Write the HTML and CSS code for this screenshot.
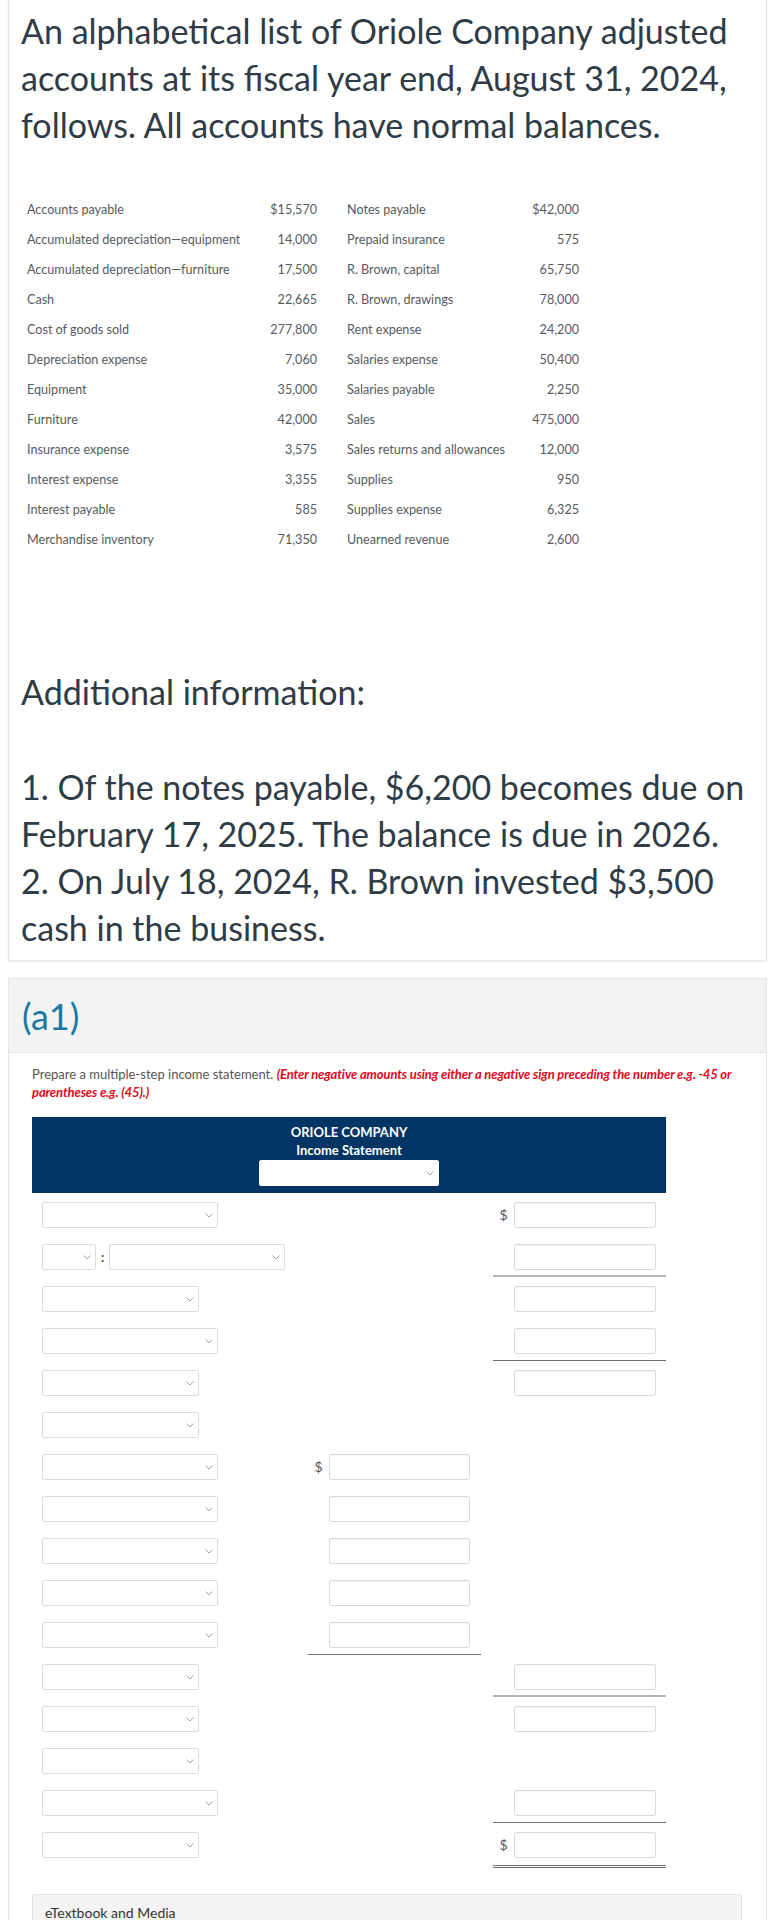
FILE: index.html
```html
<!DOCTYPE html>
<html lang="en">
<head>
<meta charset="utf-8">
<title>Oriole Company – Income Statement</title>
<link rel="stylesheet" href="styles.css">
</head>
<body>
<div class="page">
  <section class="card question">
    <p class="lead">An alphabetical list of Oriole Company adjusted accounts at its fiscal year end, August 31, 2024, follows. All accounts have normal balances.</p>
    <div class="accts">
      <span>Accounts payable</span><span class="amt">$15,570</span><span class="l2">Notes payable</span><span class="amt">$42,000</span>
      <span>Accumulated depreciation—equipment</span><span class="amt">14,000</span><span class="l2">Prepaid insurance</span><span class="amt">575</span>
      <span>Accumulated depreciation—furniture</span><span class="amt">17,500</span><span class="l2">R. Brown, capital</span><span class="amt">65,750</span>
      <span>Cash</span><span class="amt">22,665</span><span class="l2">R. Brown, drawings</span><span class="amt">78,000</span>
      <span>Cost of goods sold</span><span class="amt">277,800</span><span class="l2">Rent expense</span><span class="amt">24,200</span>
      <span>Depreciation expense</span><span class="amt">7,060</span><span class="l2">Salaries expense</span><span class="amt">50,400</span>
      <span>Equipment</span><span class="amt">35,000</span><span class="l2">Salaries payable</span><span class="amt">2,250</span>
      <span>Furniture</span><span class="amt">42,000</span><span class="l2">Sales</span><span class="amt">475,000</span>
      <span>Insurance expense</span><span class="amt">3,575</span><span class="l2">Sales returns and allowances</span><span class="amt">12,000</span>
      <span>Interest expense</span><span class="amt">3,355</span><span class="l2">Supplies</span><span class="amt">950</span>
      <span>Interest payable</span><span class="amt">585</span><span class="l2">Supplies expense</span><span class="amt">6,325</span>
      <span>Merchandise inventory</span><span class="amt">71,350</span><span class="l2">Unearned revenue</span><span class="amt">2,600</span>
    </div>
    <p class="lead addl">Additional information:</p>
    <p class="lead items">1. Of the notes payable, $6,200 becomes due on February 17, 2025. The balance is due in 2026.<br>2. On July 18, 2024, R. Brown invested $3,500 cash in the business.</p>
  </section>

  <section class="card part">
    <header class="part-head"><h2>(a1)</h2></header>
    <div class="part-body">
      <p class="instr">Prepare a multiple-step income statement. <em>(Enter negative amounts using either a negative sign preceding the number e.g. -45 or parentheses e.g. (45).)</em></p>

      <div class="stmt">
        <div class="stmt-head">
          <div>ORIOLE COMPANY</div>
          <div>Income Statement</div>
          <div class="sel hsel"><svg class="chev" width="8" height="5" viewBox="0 0 8 5"><polyline points="0.5,0.5 4,4 7.5,0.5"/></svg></div>
        </div>

        <div class="srow">
          <div class="c left"><div class="sel w-l"><svg class="chev" width="8" height="5" viewBox="0 0 8 5"><polyline points="0.5,0.5 4,4 7.5,0.5"/></svg></div></div>
          <div class="c mid"></div>
          <div class="c right"><span class="cur">$</span><div class="inp"></div></div>
        </div>
        <div class="srow">
          <div class="c left"><div class="sel w-xs"><svg class="chev" width="8" height="5" viewBox="0 0 8 5"><polyline points="0.5,0.5 4,4 7.5,0.5"/></svg></div><span class="colon">:</span><div class="sel w-l"><svg class="chev" width="8" height="5" viewBox="0 0 8 5"><polyline points="0.5,0.5 4,4 7.5,0.5"/></svg></div></div>
          <div class="c mid"></div>
          <div class="c right ul-light"><span class="cur"></span><div class="inp"></div></div>
        </div>
        <div class="srow">
          <div class="c left"><div class="sel w-s"><svg class="chev" width="8" height="5" viewBox="0 0 8 5"><polyline points="0.5,0.5 4,4 7.5,0.5"/></svg></div></div>
          <div class="c mid"></div>
          <div class="c right"><span class="cur"></span><div class="inp"></div></div>
        </div>
        <div class="srow">
          <div class="c left"><div class="sel w-l"><svg class="chev" width="8" height="5" viewBox="0 0 8 5"><polyline points="0.5,0.5 4,4 7.5,0.5"/></svg></div></div>
          <div class="c mid"></div>
          <div class="c right ul-dark"><span class="cur"></span><div class="inp"></div></div>
        </div>
        <div class="srow">
          <div class="c left"><div class="sel w-s"><svg class="chev" width="8" height="5" viewBox="0 0 8 5"><polyline points="0.5,0.5 4,4 7.5,0.5"/></svg></div></div>
          <div class="c mid"></div>
          <div class="c right"><span class="cur"></span><div class="inp"></div></div>
        </div>
        <div class="srow">
          <div class="c left"><div class="sel w-s"><svg class="chev" width="8" height="5" viewBox="0 0 8 5"><polyline points="0.5,0.5 4,4 7.5,0.5"/></svg></div></div>
          <div class="c mid"></div>
          <div class="c right"></div>
        </div>
        <div class="srow">
          <div class="c left"><div class="sel w-l"><svg class="chev" width="8" height="5" viewBox="0 0 8 5"><polyline points="0.5,0.5 4,4 7.5,0.5"/></svg></div></div>
          <div class="c mid"><span class="cur">$</span><div class="inp"></div></div>
          <div class="c right"></div>
        </div>
        <div class="srow">
          <div class="c left"><div class="sel w-l"><svg class="chev" width="8" height="5" viewBox="0 0 8 5"><polyline points="0.5,0.5 4,4 7.5,0.5"/></svg></div></div>
          <div class="c mid"><span class="cur"></span><div class="inp"></div></div>
          <div class="c right"></div>
        </div>
        <div class="srow">
          <div class="c left"><div class="sel w-l"><svg class="chev" width="8" height="5" viewBox="0 0 8 5"><polyline points="0.5,0.5 4,4 7.5,0.5"/></svg></div></div>
          <div class="c mid"><span class="cur"></span><div class="inp"></div></div>
          <div class="c right"></div>
        </div>
        <div class="srow">
          <div class="c left"><div class="sel w-l"><svg class="chev" width="8" height="5" viewBox="0 0 8 5"><polyline points="0.5,0.5 4,4 7.5,0.5"/></svg></div></div>
          <div class="c mid"><span class="cur"></span><div class="inp"></div></div>
          <div class="c right"></div>
        </div>
        <div class="srow">
          <div class="c left"><div class="sel w-l"><svg class="chev" width="8" height="5" viewBox="0 0 8 5"><polyline points="0.5,0.5 4,4 7.5,0.5"/></svg></div></div>
          <div class="c mid ul-dark"><span class="cur"></span><div class="inp"></div></div>
          <div class="c right"></div>
        </div>
        <div class="srow">
          <div class="c left"><div class="sel w-s"><svg class="chev" width="8" height="5" viewBox="0 0 8 5"><polyline points="0.5,0.5 4,4 7.5,0.5"/></svg></div></div>
          <div class="c mid"></div>
          <div class="c right ul-light"><span class="cur"></span><div class="inp"></div></div>
        </div>
        <div class="srow">
          <div class="c left"><div class="sel w-s"><svg class="chev" width="8" height="5" viewBox="0 0 8 5"><polyline points="0.5,0.5 4,4 7.5,0.5"/></svg></div></div>
          <div class="c mid"></div>
          <div class="c right"><span class="cur"></span><div class="inp"></div></div>
        </div>
        <div class="srow">
          <div class="c left"><div class="sel w-s"><svg class="chev" width="8" height="5" viewBox="0 0 8 5"><polyline points="0.5,0.5 4,4 7.5,0.5"/></svg></div></div>
          <div class="c mid"></div>
          <div class="c right"></div>
        </div>
        <div class="srow">
          <div class="c left"><div class="sel w-l"><svg class="chev" width="8" height="5" viewBox="0 0 8 5"><polyline points="0.5,0.5 4,4 7.5,0.5"/></svg></div></div>
          <div class="c mid"></div>
          <div class="c right ul-dark"><span class="cur"></span><div class="inp"></div></div>
        </div>
        <div class="srow last">
          <div class="c left"><div class="sel w-s"><svg class="chev" width="8" height="5" viewBox="0 0 8 5"><polyline points="0.5,0.5 4,4 7.5,0.5"/></svg></div></div>
          <div class="c mid"></div>
          <div class="c right ul-double"><span class="cur">$</span><div class="inp"></div></div>
        </div>
      </div>

      <div class="etext">eTextbook and Media</div>
    </div>
  </section>
</div>
</body>
</html>
```

FILE: styles.css
```css
html, body {
  margin: 0;
  padding: 0;
  background: #ffffff;
}

body {
  font-family: Lato, "Open Sans", "Liberation Sans", sans-serif;
  color: #333;
}

.page {
  padding: 0 8px;
}

.card {
  border: 1px solid #e6e6e6;
  border-top: 0;
  background: #fff;
}

/* ---------- question card ---------- */
.question {
  padding: 7px 14px 9px 12px;
  box-shadow: 0 1px 2px rgba(0, 0, 0, 0.07);
}

.lead {
  margin: 0;
  font-size: 34px;
  line-height: 47px;
  color: #2f3b45;
}

.accts {
  margin: 46px 0 0 6px;
  display: grid;
  grid-template-columns: 225px 65px 197px 65px;
  grid-auto-rows: 30px;
  align-items: center;
  font-size: 12.6px;
  color: #555b61;
}

.accts .amt {
  text-align: right;
}

.accts .l2 {
  padding-left: 30px;
}

.addl {
  margin-top: 114px;
}

.items {
  margin-top: 48px;
}

/* ---------- part card ---------- */
.part {
  margin-top: 17px;
  border-top: 1px solid #e6e6e6;
}

.part-head {
  height: 73px;
  background: #f3f3f3;
  border-bottom: 1px solid #e6e6e6;
  display: flex;
  align-items: center;
  padding-left: 13px;
}

.part-head h2 {
  margin: 0;
  font-size: 36px;
  font-weight: 400;
  color: #1b7aa3;
  line-height: 42px;
}

.part-body {
  padding: 12px 24px 0 23px;
}

.instr {
  margin: 0;
  font-size: 13px;
  line-height: 18px;
  color: #555;
}

.instr em {
  color: #e2071b;
  font-weight: 700;
  font-style: italic;
  letter-spacing: -0.12px;
}

/* ---------- statement ---------- */
.stmt {
  width: 634px;
  margin-top: 16px;
}

.stmt-head {
  background: #023564;
  color: #fff;
  text-align: center;
  font-weight: 700;
  font-size: 13px;
  line-height: 18px;
  padding: 6px 0 7px;
}

.sel {
  box-sizing: border-box;
  height: 26px;
  border: 1px solid #dcdcdc;
  border-radius: 2px;
  background: #fff;
  display: flex;
  align-items: center;
  justify-content: flex-end;
  padding-right: 4px;
  flex: none;
}

.hsel {
  width: 180px;
  margin: 1px auto 0;
  border-color: #fff;
}

.chev {
  display: block;
}

.chev polyline {
  fill: none;
  stroke: #a3a3a3;
  stroke-width: 1;
}

.w-l { width: 176px; }
.w-s { width: 157px; }
.w-xs { width: 54px; }

.srow {
  display: grid;
  grid-template-columns: 276px 173px 185px;
  height: 42px;
}

.srow.last {
  height: 45px;
}

.c {
  box-sizing: border-box;
  display: flex;
  align-items: flex-start;
  padding-top: 9px;
  height: 100%;
}

.left {
  padding-left: 10px;
  gap: 5px;
}

.colon {
  font-size: 13px;
  line-height: 26px;
  color: #555;
  font-weight: 700;
}

.mid {
  width: 173px;
}

.right {
  margin-left: 12px;
}

.cur {
  width: 21px;
  text-align: center;
  font-size: 14px;
  line-height: 26px;
  color: #555;
  flex: none;
}

.inp {
  box-sizing: border-box;
  width: 142px;
  height: 26px;
  border: 1px solid #dadada;
  border-radius: 2px;
  background: #fff;
  box-shadow: inset 0 1px 1px rgba(0, 0, 0, 0.04);
}

.mid .inp {
  width: 141px;
}

.ul-light {
  border-bottom: 2px solid #b3b3b3;
}

.ul-dark {
  border-bottom: 1px solid #6f6f6f;
}

.ul-double {
  border-bottom: 3px double #6f6f6f;
}

/* ---------- eTextbook ---------- */
.etext {
  margin-top: 26px;
  background: #f4f4f4;
  border: 1px solid #e3e3e3;
  border-radius: 3px;
  padding: 9px 12px 20px;
  font-size: 14px;
  line-height: 18px;
  color: #333;
}
```
